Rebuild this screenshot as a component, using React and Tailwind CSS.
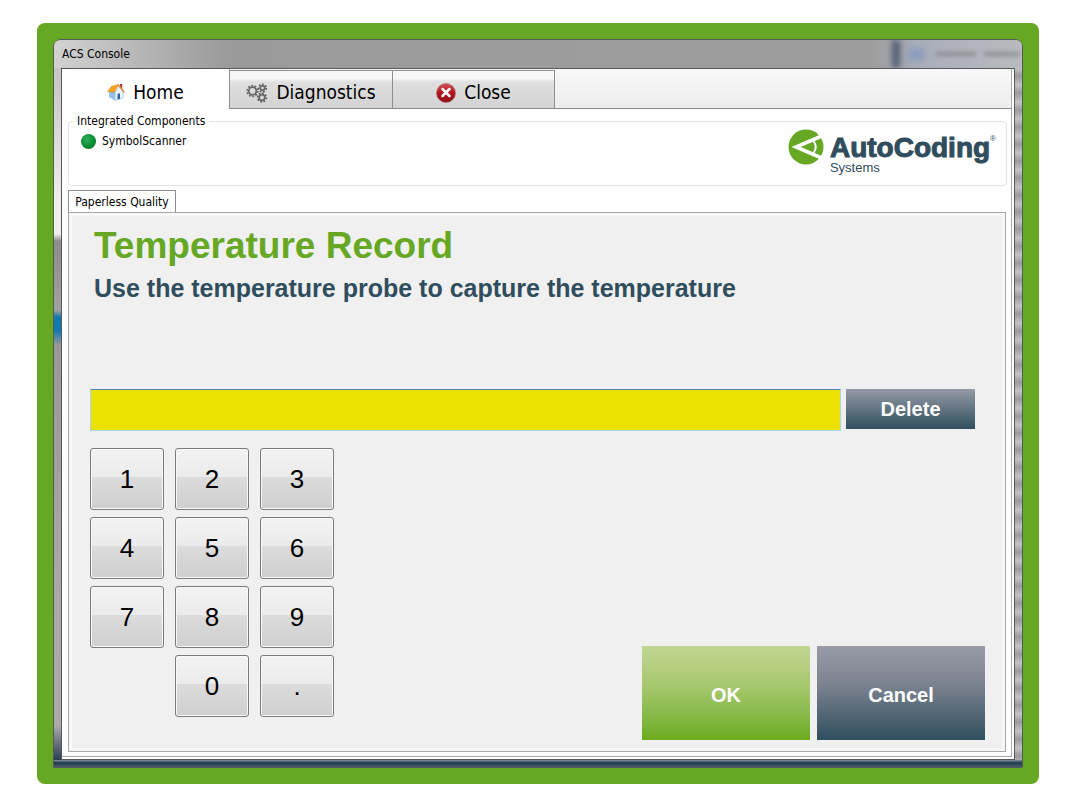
import { useState } from "react";

const KEYS = ["1", "2", "3", "4", "5", "6", "7", "8", "9", "", "0", "."];

function HomeIcon() {
  return (
    <svg viewBox="0 0 18 18" className="h-[18px] w-[18px]" aria-hidden="true">
      <path d="M2 7v7l6 3.500V9L6 5z" fill="#8fc4ec" />
      <path d="M8 17.500 16 15V9l-4.500-5.500L8 9.500z" fill="#eaf4fb" stroke="#8db3d3" strokeWidth="0.6" />
      <path d="M10.500 11 13 10.300v5.500l-2.500.800z" fill="#2f5fa0" />
      <path d="M13 1h2.200v5L13 4z" fill="#a93c35" />
      <path d="M.6 8.500 4.500 3.500 11.500 1.500 7 9.200z" fill="#f8a51e" stroke="#d97f12" strokeWidth="0.6" />
      <path d="M11.500 1.800 17 9" stroke="#e08a2c" strokeWidth="1.400" strokeLinecap="round" />
    </svg>
  );
}

function Gear({ cx, cy, r }) {
  return (
    <g fill="none" stroke="#666">
      <circle cx={cx} cy={cy} r={r} strokeWidth="1.700" />
      <circle cx={cx} cy={cy} r={r + 1.5} strokeWidth="1.800" strokeDasharray="1.800 1.500" />
    </g>
  );
}

function GearsIcon() {
  return (
    <svg viewBox="0 0 22 20" className="h-5 w-[22px]" aria-hidden="true">
      <Gear cx={6.5} cy={8} r={3.8} />
      <Gear cx={16.5} cy={5} r={2.2} />
      <Gear cx={16} cy={14.5} r={2.8} />
    </svg>
  );
}

function CloseIcon() {
  return (
    <svg viewBox="0 0 20 20" className="h-5 w-5" aria-hidden="true">
      <defs>
        <linearGradient id="closeRed" x1="0" y1="0" x2="0" y2="1">
          <stop offset="0" stopColor="#d4545a" />
          <stop offset="0.5" stopColor="#b3141c" />
          <stop offset="1" stopColor="#8d1219" />
        </linearGradient>
      </defs>
      <circle cx="10" cy="10" r="9.500" fill="url(#closeRed)" stroke="#a9686b" strokeWidth="0.6" />
      <path d="m6.500 6 7 7m0-7-7 7" stroke="#fff" strokeWidth="2.500" strokeLinecap="round" />
    </svg>
  );
}

function Logo() {
  return (
    <div className="flex items-start font-['Liberation_Sans',sans-serif] text-[#2f4d5d]">
      <svg viewBox="0 0 36 36" className="h-9 w-9" aria-hidden="true">
        <circle cx="18" cy="18" r="17.500" fill="#66a824" />
        <path d="M37 5.500 8 18l29 12.500" fill="none" stroke="#fff" strokeWidth="3.600" />
        <path d="M25.500 12q4.500 6 0 12" fill="none" stroke="#fff" strokeWidth="2" />
      </svg>
      <div className="ml-1.5 pt-1">
        <div className="flex h-7 items-start text-[28px] leading-[30px] font-bold">
          <span className="[-webkit-text-stroke:1px_#2f4d5d]">AutoCoding</span>
          <span className="text-[8px] leading-3 font-normal">®</span>
        </div>
        <div className="text-[13px] leading-[14px]">Systems</div>
      </div>
    </div>
  );
}

function MainTab({ icon, label, active, className }) {
  return (
    <button
      type="button"
      role="tab"
      aria-selected={active}
      className={`flex items-center justify-center gap-2 text-[19px] ${className}`}
    >
      {icon}
      {label}
    </button>
  );
}

const raisedTab =
  "h-[38px] border-t border-r border-[#8b8e93] bg-linear-to-b from-[#f7f7f7] from-20% via-[#e0e0e0] via-30% to-[#d3d3d3] pt-1.5";

function TitleBar() {
  return (
    <header className="flex h-7 items-center justify-between rounded-t-md bg-linear-to-r from-[#d2d2d2] via-[#9a9a9a] via-18% to-[#9e9e9e] pl-2 text-xs">
      ACS Console
      <div aria-hidden="true" className="flex h-7 w-[150px] items-center overflow-hidden rounded-tr-md bg-linear-to-r from-[#9e9e9e] via-[#a9adb8] via-30% to-[#b9bbc0]">
        <span className="ml-5 h-7 w-2 bg-[#4f5b70] blur-[3px]" />
        <span className="ml-2 h-3 w-4 bg-[#8a9dc0] blur-[3px]" />
        <span className="ml-3 h-1 w-10 bg-[#8d8e93] blur-[2px]" />
        <span className="ml-2 h-1 w-9 bg-[#8d8e93] blur-[2px]" />
      </div>
    </header>
  );
}

export default function App() {
  const [value, setValue] = useState("");

  return (
    <div className="min-h-screen bg-white pt-[23px] pr-[41px] pb-7 pl-[37px] font-['DejaVu_Sans_Condensed','Noto_Sans',sans-serif] text-black">
      <div className="rounded-lg bg-[#66a824] p-4">
        <div className="rounded-t-lg border border-[#55585c]">
          <TitleBar />

          <div className="flex">
            <div className="w-[7px] bg-[linear-gradient(#c4c4c4,#f0f0f0_20%,#f0f0f0_24%,#8c8c8c_25%,#a2a2a2_35%,#1478b0_36%,#1478b0_38%,#999_40%,#a8a8a8_75%,#aaa_95%,#2a3f54)]" />

            <div className="min-w-0 flex-1 border border-[#55585c] bg-white">
              <div className="mr-0.5 mb-0.5 border-r border-b border-[#a5a8ad]">
                <div role="tablist" className="flex h-10 items-end border-b border-[#8b8e93] bg-linear-to-b from-[#f8f8f8] to-[#ededed]">
                  <MainTab icon={<HomeIcon />} label="Home" active className="-mb-px h-10 w-[168px] border-r border-[#8b8e93] bg-white pt-1.5" />
                  <MainTab icon={<GearsIcon />} label="Diagnostics" active={false} className={`w-[163px] ${raisedTab}`} />
                  <MainTab icon={<CloseIcon />} label="Close" active={false} className={`w-[162px] ${raisedTab}`} />
                </div>

                <div className="pt-1 pr-1 pb-1 pl-1.5">
                  <fieldset className="flex h-[73px] items-start justify-between rounded-sm border border-[#e2e4e8] pr-2.5 pl-3">
                    <legend className="-ml-2 px-1 text-xs">Integrated Components</legend>
                    <div className="flex items-center gap-1.5 pt-1 text-xs">
                      <span className="h-[15px] w-[15px] rounded-full bg-radial-[at_40%_35%] from-[#2fae57] via-[#0a8f35] to-[#08601f]" />
                      SymbolScanner
                    </div>
                    <Logo />
                  </fieldset>

                  <button type="button" className="mt-1 -mb-px block h-[23px] w-[108px] border border-b-0 border-[#8b8e93] bg-white text-xs">
                    Paperless Quality
                  </button>

                  <main className="mr-px border border-[#a5a8ad] bg-[#f0f0f0] pt-3 pr-5 pb-[11px] pl-[21px] font-['Liberation_Sans',sans-serif] inset-ring-3 inset-ring-[#f7f7f7]">
                    <h1 className="pl-1 text-[37px] leading-[42px] font-bold text-[#66a824]">Temperature Record</h1>
                    <h2 className="pl-1 text-[25px] leading-[42px] font-bold text-[#2f4d5d]">
                      Use the temperature probe to capture the temperature
                    </h2>
                    <div className="mt-20 flex gap-[5px] pr-2.5">
                      <input
                        aria-label="Temperature"
                        value={value}
                        onChange={(e) => setValue(e.target.value)}
                        className="h-[42px] min-w-0 flex-1 border border-x-[#a9d3ee] border-t-[#4f88b5] border-b-[#a9d3ee] bg-[#ece100] px-2 text-2xl outline-none"
                      />
                      <button
                        type="button"
                        onClick={() => setValue(value.slice(0, -1))}
                        className="h-10 w-[129px] bg-linear-to-b from-[#969aa6] to-[#2f4f5f] text-xl font-bold text-white"
                      >
                        Delete
                      </button>
                    </div>
                    <div className="mt-[17px] flex items-end justify-between">
                      <div className="mb-[23px] grid grid-cols-[repeat(3,74px)] gap-x-[11px] gap-y-[7px]">
                        {KEYS.map((key, i) =>
                          key ? (
                            <button
                              key={i}
                              type="button"
                              onClick={() => setValue(value + key)}
                              className="h-[62px] rounded-[3px] border border-[#7b7b7b] bg-[linear-gradient(#f3f3f3,#ebebeb_46%,#dcdcdc_47%,#cfcfcf)] text-[26px] inset-ring inset-ring-[#f8f8f8]"
                            >
                              {key}
                            </button>
                          ) : (
                            <span key={i} />
                          )
                        )}
                      </div>
                      <div className="flex gap-[7px]">
                        <button type="button" className="h-[94px] w-[168px] bg-linear-to-b from-[#c1d692] via-[#a9c970] via-40% to-[#6bac1b] pt-1 text-xl font-bold text-white">
                          OK
                        </button>
                        <button type="button" className="h-[94px] w-[168px] bg-linear-to-b from-[#999ca7] via-[#7d8391] via-40% to-[#2f4f5f] pt-1 text-xl font-bold text-white">
                          Cancel
                        </button>
                      </div>
                    </div>
                  </main>
                </div>
              </div>
            </div>

            <div className="w-[7px] bg-[repeating-linear-gradient(#c4c4c4_0,#9a9a9a_8px,#c4c4c4_17px)]" />
          </div>

          <div className="h-[7px] bg-linear-to-b from-[#8a939c] via-[#1f3a50] via-40% to-[#4a5d6e]" />
        </div>
      </div>
    </div>
  );
}
